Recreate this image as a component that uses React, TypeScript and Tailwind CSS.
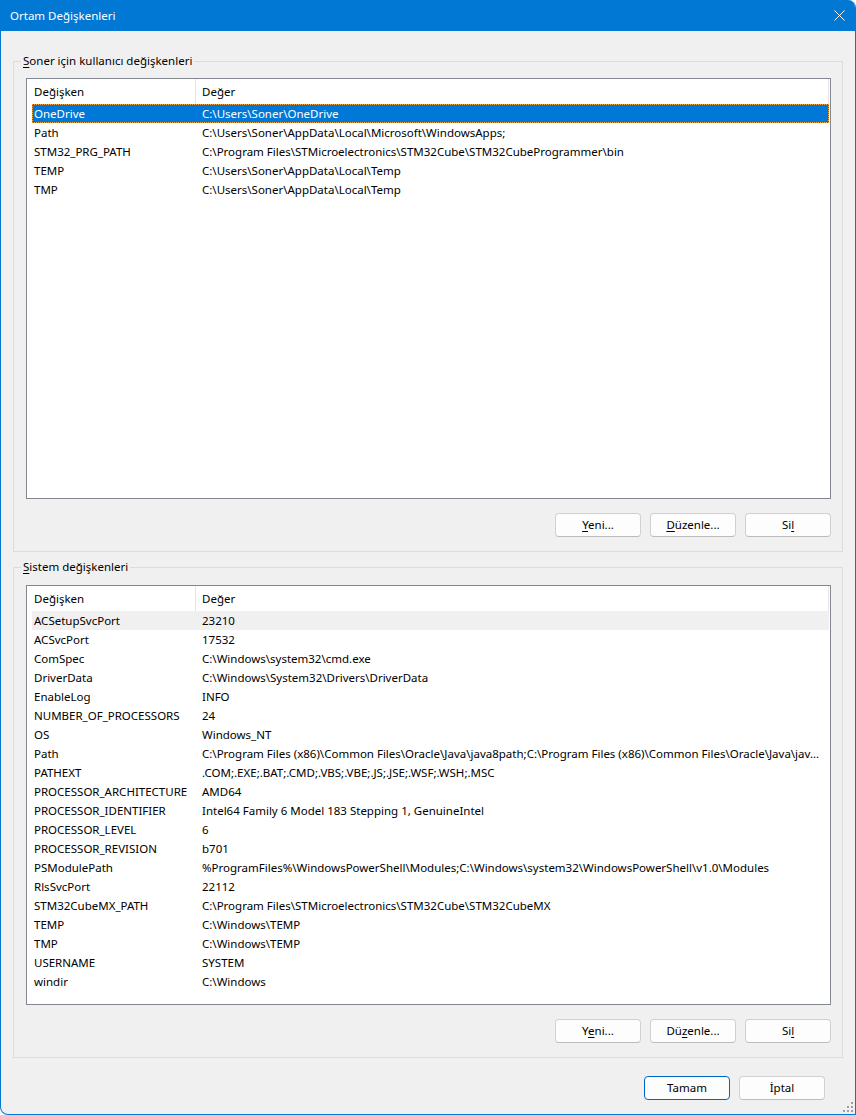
import React from 'react'

type Row = [string, string]

const userVars: Row[] = [
  ['OneDrive', 'C:\\Users\\Soner\\OneDrive'],
  ['Path', 'C:\\Users\\Soner\\AppData\\Local\\Microsoft\\WindowsApps;'],
  ['STM32_PRG_PATH', 'C:\\Program Files\\STMicroelectronics\\STM32Cube\\STM32CubeProgrammer\\bin'],
  ['TEMP', 'C:\\Users\\Soner\\AppData\\Local\\Temp'],
  ['TMP', 'C:\\Users\\Soner\\AppData\\Local\\Temp'],
]

const systemVars: Row[] = [
  ['ACSetupSvcPort', '23210'],
  ['ACSvcPort', '17532'],
  ['ComSpec', 'C:\\Windows\\system32\\cmd.exe'],
  ['DriverData', 'C:\\Windows\\System32\\Drivers\\DriverData'],
  ['EnableLog', 'INFO'],
  ['NUMBER_OF_PROCESSORS', '24'],
  ['OS', 'Windows_NT'],
  [
    'Path',
    'C:\\Program Files (x86)\\Common Files\\Oracle\\Java\\java8path;C:\\Program Files (x86)\\Common Files\\Oracle\\Java\\jav...',
  ],
  ['PATHEXT', '.COM;.EXE;.BAT;.CMD;.VBS;.VBE;.JS;.JSE;.WSF;.WSH;.MSC'],
  ['PROCESSOR_ARCHITECTURE', 'AMD64'],
  ['PROCESSOR_IDENTIFIER', 'Intel64 Family 6 Model 183 Stepping 1, GenuineIntel'],
  ['PROCESSOR_LEVEL', '6'],
  ['PROCESSOR_REVISION', 'b701'],
  ['PSModulePath', '%ProgramFiles%\\WindowsPowerShell\\Modules;C:\\Windows\\system32\\WindowsPowerShell\\v1.0\\Modules'],
  ['RlsSvcPort', '22112'],
  ['STM32CubeMX_PATH', 'C:\\Program Files\\STMicroelectronics\\STM32Cube\\STM32CubeMX'],
  ['TEMP', 'C:\\Windows\\TEMP'],
  ['TMP', 'C:\\Windows\\TEMP'],
  ['USERNAME', 'SYSTEM'],
  ['windir', 'C:\\Windows'],
]

// label with one underlined access key
const Key = ({ pre, k, post }: { pre?: string; k: string; post?: string }) => (
  <>
    {pre}
    <span className="underline underline-offset-2">{k}</span>
    {post}
  </>
)

const Button = ({ children, primary }: { children: React.ReactNode; primary?: boolean }) => (
  <button
    className={
      primary
        ? 'w-[86px] h-[24px] rounded-[4px] border border-[#0067c0] bg-[#fdfdfd] text-black text-[11.5px] leading-none'
        : 'w-[86px] h-[24px] rounded-[4px] border border-[#d0d0d0] border-b-[#bcbcbc] bg-[#fdfdfd] text-black text-[11.5px] leading-none'
    }
  >
    {children}
  </button>
)

const ListView = ({
  rows,
  selected,
  hovered,
  tall,
}: {
  rows: Row[]
  selected?: number
  hovered?: number
  tall?: boolean
}) => (
  <div className={tall ? 'h-[421px] border border-[#828790] bg-white overflow-hidden' : 'h-[420px] border border-[#828790] bg-white overflow-hidden'}>
    <div className="flex h-[25px] items-center">
      <div className="w-[168px] h-full flex items-center pl-[7px]">Değişken</div>
      <div className="flex-1 h-full flex items-center pl-[6px] border-l border-[#e5e5e5]">Değer</div>
      <div className="w-[2px] h-full border-l border-[#e5e5e5]" />
    </div>
    {rows.map(([name, value], i) => {
      const sel = i === selected
      const hov = i === hovered
      return (
        <div
          key={name + i}
          className={
            sel
              ? 'ml-[5px] mr-[1px] flex h-[19px] items-center bg-[#0078d7] text-white outline outline-1 outline-dotted outline-[#f0a64b] -outline-offset-1'
              : hov
                ? 'ml-[5px] mr-[1px] flex h-[19px] items-center bg-[#f0f0f0]'
                : 'ml-[5px] mr-[1px] flex h-[19px] items-center'
          }
        >
          <div className="w-[163px] pl-[2px] whitespace-nowrap">{name}</div>
          <div className="flex-1 min-w-0 pl-[7px] whitespace-nowrap overflow-hidden">{value}</div>
        </div>
      )
    })}
  </div>
)

const Group = ({
  label,
  rows,
  selected,
  hovered,
  second,
}: {
  label: React.ReactNode
  rows: Row[]
  selected?: number
  hovered?: number
  second?: boolean
}) => (
  <div
    className={
      second
        ? 'relative w-[830px] h-[491px] border border-[#dcdcdc] pt-[17px] pl-[12px] pr-[11px]'
        : 'relative w-[830px] h-[491px] border border-[#dcdcdc] pt-[16px] pl-[12px] pr-[11px]'
    }
  >
    <span className="absolute left-[7px] -top-[9px] px-[2px] bg-[#f0f0f0] leading-[16px]">{label}</span>
    <ListView rows={rows} selected={selected} hovered={hovered} tall={!second} />
    <div className="flex justify-end gap-[9px] mt-[14px]">
      {second ? (
        <>
          <Button>
            <Key pre="Y" k="e" post="ni..." />
          </Button>
          <Button>
            <Key pre="Dü" k="z" post="enle..." />
          </Button>
          <Button>
            <Key pre="Si" k="l" />
          </Button>
        </>
      ) : (
        <>
          <Button>
            <Key k="Y" post="eni..." />
          </Button>
          <Button>
            <Key k="D" post="üzenle..." />
          </Button>
          <Button>
            <Key pre="Si" k="l" />
          </Button>
        </>
      )}
    </div>
  </div>
)

export default function App() {
  return (
    <div className="w-[856px] h-[1115px] bg-white">
      <div
        className="relative w-[856px] h-[1115px] flex flex-col bg-[#f0f0f0] border-x border-b border-[#0078d4] rounded-tr-[8px] rounded-bl-[8px] overflow-hidden text-[11.5px] text-black"
        style={{ fontFamily: '"Noto Sans", "Segoe UI", sans-serif' }}
      >
        <div className="h-[31px] -mx-px bg-[#0078d4] flex items-center justify-between pl-[10px] pr-[10px] text-white">
          <span className="text-[11.5px]">Ortam Değişkenleri</span>
          <svg width="11" height="11" viewBox="0 0 11 11" className="mr-[1px]">
            <path d="M0.5 0.5 L10.5 10.5 M10.5 0.5 L0.5 10.5" stroke="white" strokeWidth="1" fill="none" />
          </svg>
        </div>
        <div className="flex flex-col gap-[15px] pl-[12px] pt-[30px]">
          <Group label={<Key k="S" post="oner için kullanıcı değişkenleri" />} rows={userVars} selected={0} />
          <Group label={<Key k="S" post="istem değişkenleri" />} rows={systemVars} hovered={0} second />
        </div>
        <div className="flex justify-end gap-[9px] pt-[18px] pr-[30px]">
          <Button primary>Tamam</Button>
          <Button>İptal</Button>
        </div>
        {/* size grip */}
        <svg width="10" height="10" viewBox="0 0 10 10" className="absolute right-[2px] bottom-[2px]">
          <g fill="#a0a0a0">
            <rect x="8" y="0" width="2" height="2" />
            <rect x="4" y="4" width="2" height="2" />
            <rect x="8" y="4" width="2" height="2" />
            <rect x="0" y="8" width="2" height="2" />
            <rect x="4" y="8" width="2" height="2" />
            <rect x="8" y="8" width="2" height="2" />
          </g>
        </svg>
      </div>
    </div>
  )
}
